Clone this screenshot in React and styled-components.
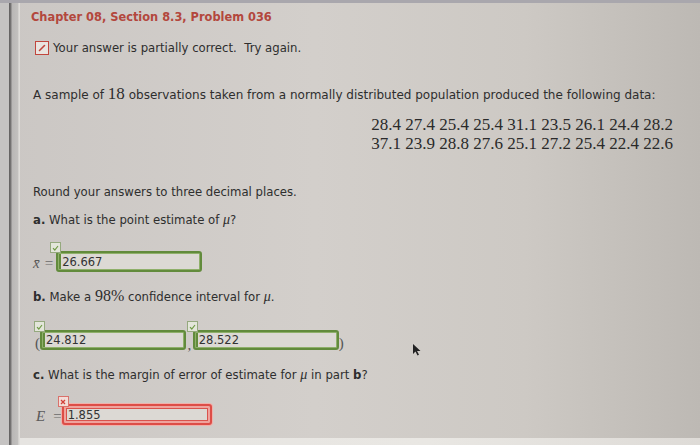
import React from "react";
import styled, { createGlobalStyle } from "styled-components";

const Global = createGlobalStyle`
  html, body { margin: 0; padding: 0; }
  body {
    width: 700px; height: 445px; overflow: hidden;
    background: #c9c6c3;
    font-family: "DejaVu Sans", Verdana, sans-serif;
  }
`;

const Screen = styled.div`
  position: relative;
  width: 700px;
  height: 445px;
  display: flex;
  flex-direction: column;
  background: linear-gradient(90deg, #cbc7c4 0%, #d3cfcb 45%, #cdc9c4 75%, #bdb9b4 100%);
`;

const TopStrip = styled.div`
  height: 3px;
  background: #a9a7ad;
`;

const Body = styled.div`
  flex: 1;
  display: flex;
  min-height: 0;
`;

const LeftFrame = styled.div`
  width: 20px;
  flex: none;
  background: linear-gradient(90deg, #c5c3c2 0px, #c5c3c2 9px, #5f5d5d 9px, #7a7878 11px, #b9b7b6 12px, #c2c0be 18px, #e4e2df 19px, #d9d6d2 20px);
`;

const Panel = styled.div`
  flex: 1;
  display: flex;
  flex-direction: column;
  padding-left: 11px;
  color: #2e2e2e;
  font-size: 11.7px;
`;

const Title = styled.div`
  margin-top: 7px;
  font-weight: bold;
  font-size: 11.4px;
  color: #b3473d;
  line-height: 14px;
`;

const Status = styled.div`
  display: flex;
  align-items: center;
  gap: 4px;
  margin-top: 17px;
  margin-left: 4px;
  line-height: 14px;
  font-size: 11.7px;
`;

const StatusIcon = styled.span`
  width: 12px;
  height: 12px;
  border: 1.5px solid #c1463d;
  background: #e9e4e0;
  display: inline-flex;
  align-items: center;
  justify-content: center;
`;

const Para = styled.div`
  margin-top: ${(p) => p.$mt}px;
  margin-left: 2px;
  line-height: 14px;
  white-space: nowrap;
  font-size: ${(p) => p.$size || 11.7}px;
`;

const Serif = styled.span`
  font-family: "Liberation Serif", "Times New Roman", serif;
  font-size: ${(p) => p.$size || 15}px;
  font-style: ${(p) => (p.$italic ? "italic" : "normal")};
`;

const DataBlock = styled.div`
  display: flex;
  flex-direction: column;
  align-items: flex-end;
  margin-top: 13px;
  margin-right: 27px;
  font-family: "Liberation Serif", "Times New Roman", serif;
  font-size: 17px;
  line-height: 19px;
  color: #2a2a2a;
`;

const Bold = styled.b`
  font-weight: bold;
`;

const AnswerRow = styled.div`
  display: flex;
  align-items: flex-end;
  margin-top: ${(p) => p.$mt}px;
  margin-left: ${(p) => p.$ml || 0}px;
  height: 22px;
`;

const Label = styled.span`
  font-family: "Liberation Serif", "Times New Roman", serif;
  font-style: italic;
  font-size: 15px;
  color: #5a5a5a;
  line-height: 18px;
  margin-right: ${(p) => p.$gap}px;
`;

const Eq = styled.span`
  font-family: "Liberation Serif", "Times New Roman", serif;
  font-size: 15px;
  color: #6a6a6a;
  line-height: 18px;
  margin-right: ${(p) => p.$gap || 0}px;
`;

const Punct = styled.span`
  font-family: "Liberation Serif", "Times New Roman", serif;
  font-size: 15px;
  color: #555;
  line-height: 16px;
  margin-bottom: ${(p) => p.$mb || 0}px;
  padding: 0 ${(p) => p.$pad || 0}px;
`;

const InputWrap = styled.div`
  position: relative;
  display: flex;
`;

const Input = styled.div`
  box-sizing: border-box;
  width: ${(p) => p.$w}px;
  height: ${(p) => p.$h || 20}px;
  border-radius: 3px;
  display: flex;
  align-items: center;
  padding-left: 4px;
  font-size: 11.5px;
  color: #333;
  background: #dcd9d4;
  border: 2px solid ${(p) => (p.$wrong ? "#dd4d47" : "#628b3c")};
  box-shadow: ${(p) =>
    p.$wrong
      ? "inset 0 0 0 2px #efa39d, inset 0 0 0 3px #d9534d, 0 0 0 1px #f0b0aa"
      : "inset 0 0 0 1px #8fb06a, inset 2px 0 0 1px #628b3c"};
`;

const Badge = styled.span`
  position: absolute;
  left: ${(p) => p.$left}px;
  top: ${(p) => p.$top}px;
  width: 11px;
  height: 11px;
  box-sizing: border-box;
  border: 1px solid ${(p) => (p.$wrong ? "#d9716b" : "#95a97e")};
  background: ${(p) => (p.$wrong ? "#f2dcd8" : "#e3e6da")};
  display: flex;
  align-items: center;
  justify-content: center;
`;

const BottomBand = styled.div`
  position: absolute;
  left: 20px;
  right: 0;
  bottom: 0;
  height: 7px;
  background: linear-gradient(90deg, #e6e4e1, #e9e7e3 60%, #dedbd7);
`;

const Cursor = styled.svg`
  position: absolute;
  left: 412px;
  top: 343px;
`;

const Check = () => (
  <svg width="7" height="6" viewBox="0 0 7 6">
    <path d="M1 3.2 L2.8 5 L6 1" fill="none" stroke="#6f9a45" strokeWidth="1.2" />
  </svg>
);

const Cross = () => (
  <svg width="6" height="6" viewBox="0 0 6 6">
    <path d="M1 1 L5 5 M5 1 L1 5" fill="none" stroke="#d2403a" strokeWidth="1.3" />
  </svg>
);

const Mu = () => <Serif $italic $size={14}>μ</Serif>;

export default function App() {
  return (
    <Screen>
      <Global />
      <TopStrip />
      <Body>
        <LeftFrame />
        <Panel>
          <Title>Chapter 08, Section 8.3, Problem 036</Title>
          <Status>
            <StatusIcon>
              <svg width="8" height="8" viewBox="0 0 8 8">
                <path d="M1.5 6.5 L6.5 1.5" stroke="#c1463d" strokeWidth="1.6" strokeLinecap="round" />
              </svg>
            </StatusIcon>
            <span>Your answer is partially correct.&nbsp; Try again.</span>
          </Status>
          <Para $mt={32} $size={12}>
            A sample of <Serif $size={17}>18</Serif> observations taken from a normally distributed population produced the following data:
          </Para>
          <DataBlock>
            <div>28.4 27.4 25.4 25.4 31.1 23.5 26.1 24.4 28.2</div>
            <div>37.1 23.9 28.8 27.6 25.1 27.2 25.4 22.4 22.6</div>
          </DataBlock>
          <Para $mt={32}>Round your answers to three decimal places.</Para>
          <Para $mt={14}>
            <Bold>a.</Bold> What is the point estimate of <Mu />?
          </Para>
          <AnswerRow $mt={23} $ml={2}>
            <Label $gap={5}>x̄</Label>
            <Eq $gap={3}>=</Eq>
            <InputWrap>
              <Badge $left={-6} $top={-9}>
                <Check />
              </Badge>
              <Input $w={146} $h={21}>26.667</Input>
            </InputWrap>
          </AnswerRow>
          <Para $mt={17}>
            <Bold>b.</Bold> Make a <Serif $size={16}>98%</Serif> confidence interval for <Mu />.
          </Para>
          <AnswerRow $mt={24} $ml={4}>
            <Punct $mb={-1}>(</Punct>
            <InputWrap>
              <Badge $left={-6} $top={-9}>
                <Check />
              </Badge>
              <Input $w={146}>24.812</Input>
            </InputWrap>
            <Punct $mb={-3} $pad={1.5}>,</Punct>
            <InputWrap>
              <Badge $left={-6} $top={-9}>
                <Check />
              </Badge>
              <Input $w={146}>28.522</Input>
            </InputWrap>
            <Punct $mb={-1}>)</Punct>
          </AnswerRow>
          <Para $mt={18}>
            <Bold>c.</Bold> What is the margin of error of estimate for <Mu /> in part <Bold>b</Bold>?
          </Para>
          <AnswerRow $mt={21} $ml={5}>
            <Label $gap={8}>E</Label>
            <Eq>=</Eq>
            <InputWrap>
              <Badge $wrong $left={-4} $top={-8}>
                <Cross />
              </Badge>
              <Input $wrong $w={150} $h={21}>1.855</Input>
            </InputWrap>
          </AnswerRow>
        </Panel>
      </Body>
      <BottomBand />
      <Cursor width="12" height="14" viewBox="0 0 12 14">
        <path d="M1 1 L1 11 L3.5 8.5 L5.5 12.5 L7 11.8 L5 8 L8.5 8 Z" fill="#222" />
      </Cursor>
    </Screen>
  );
}
